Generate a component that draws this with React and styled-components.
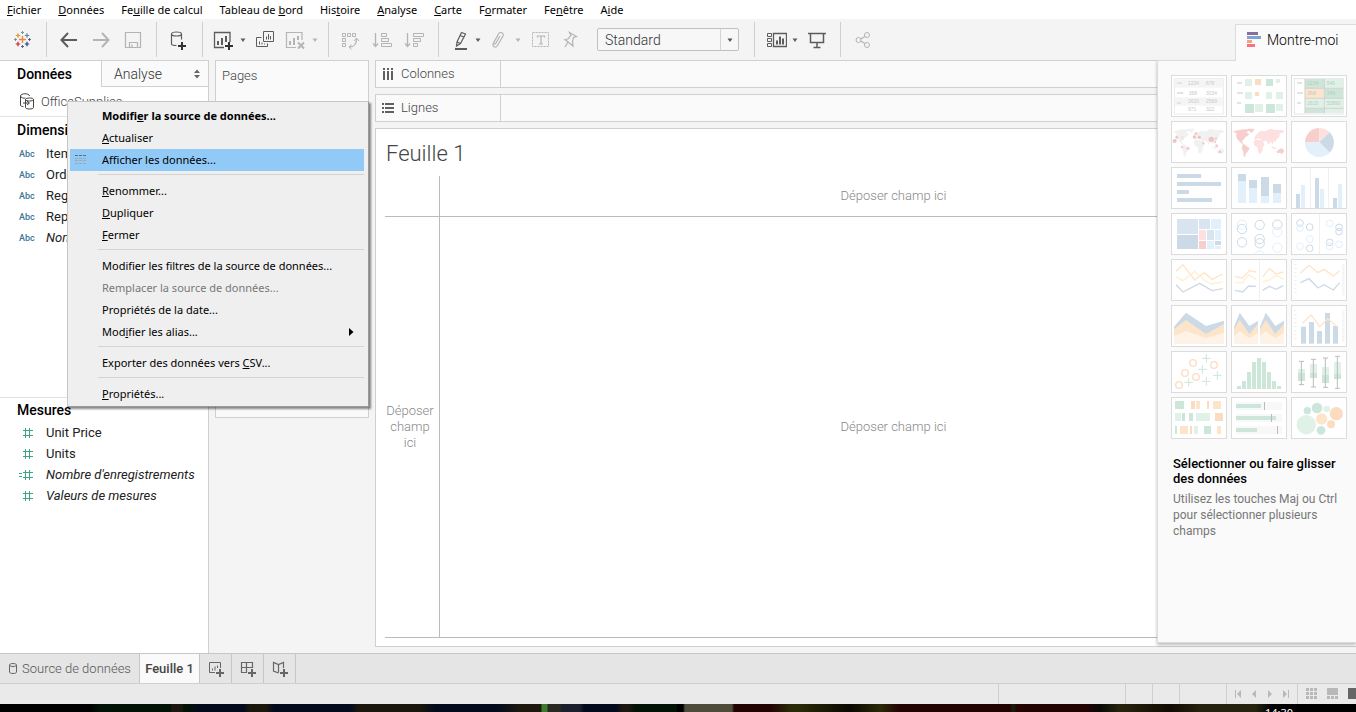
import React from "react";
import styled, { createGlobalStyle, css } from "styled-components";

const GlobalStyle = createGlobalStyle`
  * { box-sizing: border-box; }
  body { margin: 0; overflow: hidden; background: #f4f4f4; }
  button, select { font: inherit; color: inherit; }
  button { border: 0; padding: 0; background: none; text-align: left; }
  h1, h2, p, ul { margin: 0; padding: 0; font-weight: normal; }
  ul { list-style: none; }
  svg { display: block; flex: none; }
`;

const systemFont = `"Noto Sans", "Open Sans", sans-serif`;
const appFont = `Roboto, "Liberation Sans", sans-serif`;
const line = "#d0d0d0";

const Window = styled.div`
  position: relative;
  display: flex;
  flex-direction: column;
  height: 100vh;
  font: 300 13px/16px ${appFont};
  color: #333;
`;

/* ---------- menu bar ---------- */

const MenuBar = styled.nav`
  display: flex;
  gap: 17px;
  height: 19px;
  flex: none;
  padding: 0 7px;
  background: #fff;
  color: #000;
  font: 11px/19px ${systemFont};
  white-space: nowrap;
`;

/* ---------- toolbar ---------- */

const Toolbar = styled.div`
  display: flex;
  align-items: center;
  height: 41px;
  flex: none;
`;

const ToolGroup = styled.div`
  display: flex;
  align-items: center;
  gap: ${(p) => p.$gap ?? 8}px;
  height: 35px;
  padding: 0 ${(p) => p.$end ?? 11}px 0 ${(p) => p.$start ?? 10}px;
  border-right: ${(p) => (p.$last ? "0" : `1px solid ${line}`)};
`;

const ToolButton = styled.button`
  display: flex;
  align-items: center;
  gap: 4px;
  height: 24px;
  color: ${(p) => (p.disabled ? "#b4b4b4" : "#5c5c5c")};
`;

const SelectBox = styled.span`
  position: relative;
  display: block;
  width: 142px;
  margin-left: 15px;
`;

const FitSelect = styled.select`
  display: block;
  width: 100%;
  height: 23px;
  padding: 0 7px;
  appearance: none;
  border: 1px solid #c0c0c0;
  border-radius: 2px;
  background: #f7f7f7;
  font: 300 14px/20px ${appFont};
  color: #333;
`;

const SelectArrow = styled.span`
  position: absolute;
  top: 1px;
  right: 1px;
  bottom: 1px;
  display: flex;
  align-items: center;
  justify-content: center;
  width: 18px;
  border-left: 1px solid #d4d4d4;
  color: #555;
  pointer-events: none;
`;

/* ---------- work area ---------- */

const WorkArea = styled.main`
  display: flex;
  flex: 1;
  min-height: 0;
`;

const DataPane = styled.aside`
  display: flex;
  flex-direction: column;
  width: 209px;
  flex: none;
  border-top: 1px solid ${line};
  border-right: 1px solid ${line};
  background: #fff;
`;

const PaneTabs = styled.div`
  display: flex;
  height: 26px;
  flex: none;
`;

const PaneTab = styled.button`
  display: flex;
  align-items: center;
  justify-content: space-between;
  flex: ${(p) => (p.$active ? "0 0 101px" : "1")};
  padding: 0 8px 0 ${(p) => (p.$active ? 17 : 12)}px;
  font-size: 14px;
  ${(p) =>
    p.$active
      ? css`
          font-weight: 500;
          color: #000;
        `
      : css`
          border-left: 1px solid ${line};
          border-bottom: 1px solid ${line};
          background: #fafafa;
        `}
`;

const SourceRow = styled.button`
  display: flex;
  align-items: center;
  gap: 5px;
  height: 30px;
  flex: none;
  padding-left: 19px;
  border-bottom: 1px solid #e2e2e2;
  color: #444;
`;

const FieldSection = styled.section`
  flex: ${(p) => p.$share} 1 0;
  min-height: 0;
  padding-top: ${(p) => p.$top}px;
  border-top: ${(p) => (p.$ruled ? "1px solid #e2e2e2" : "0")};
`;

const FieldHeading = styled.h2`
  padding-left: 17px;
  font: 500 14px/16px ${appFont};
  color: #000;
`;

const FieldList = styled.ul`
  padding-top: 5px;
`;

const Field = styled.li`
  display: flex;
  align-items: center;
  height: 21px;
  padding-left: 19px;
  font-style: ${(p) => (p.$calculated ? "italic" : "normal")};
  color: #222;
  white-space: nowrap;
`;

const TypeMark = styled.span`
  width: 27px;
  font: 500 9px/16px ${appFont};
  color: #3c7896;
`;

const CardColumn = styled.div`
  width: 166px;
  flex: none;
  padding: 0 6px;
`;

const ShelfCard = styled.section`
  height: 358px;
  padding: 7px 6px;
  border: 1px solid ${line};
  background: #fafafa;
  color: #444;
`;

const SheetColumn = styled.div`
  display: flex;
  flex-direction: column;
  flex: 1;
  gap: 6px;
  min-width: 0;
  padding-bottom: 6px;
`;

const Shelf = styled.div`
  display: flex;
  height: 28px;
  flex: none;
  border: 1px solid ${line};
  border-right: 0;
  background: #fafafa;
`;

const ShelfLabel = styled.div`
  display: flex;
  align-items: center;
  gap: 7px;
  width: 125px;
  padding-left: 6px;
  border-right: 1px solid ${line};
  color: #444;
`;

const Sheet = styled.section`
  display: flex;
  flex-direction: column;
  flex: 1;
  padding: 10px 9px 8px;
  border: 1px solid ${line};
  border-right: 0;
  background: #fff;
`;

const SheetTitle = styled.h1`
  height: 37px;
  padding-left: 1px;
  font: 300 22px/30px ${appFont};
  color: #444;
`;

const DropGrid = styled.div`
  display: grid;
  grid-template: 41px 1fr / 55px 1fr;
  flex: 1;
  border-bottom: 1px solid #bbb;
`;

const DropZone = styled.div`
  display: flex;
  align-items: center;
  justify-content: center;
  padding-right: ${(p) => (p.$narrow ? 4 : 0)}px;
  border-right: ${(p) => (p.$right ? "1px solid #bbb" : "0")};
  border-bottom: ${(p) => (p.$bottom ? "1px solid #bbb" : "0")};
  text-align: center;
  color: #888;
`;

/* ---------- show me ---------- */

const ShowMe = styled.aside`
  position: absolute;
  top: 24px;
  right: 0;
  display: flex;
  flex-direction: column;
  width: 199px;
  height: calc(100vh - 93px);
`;

const ShowMeTab = styled.button`
  z-index: 1;
  display: flex;
  align-items: center;
  gap: 6px;
  height: 37px;
  flex: none;
  margin: 0 0 -1px 78px;
  padding: 0 0 6px 11px;
  border: 1px solid #dcdcdc;
  border-width: 1px 0 0 1px;
  background: #fafafa;
  font-size: 14px;
  color: #000;
  white-space: nowrap;
`;

const ShowMeBody = styled.div`
  flex: 1;
  padding: 14px 9px 0 13px;
  border: 1px solid #dcdcdc;
  border-right: 0;
  background: #fafafa;
  box-shadow: 0 2px 3px #0004;
`;

const ThumbGrid = styled.div`
  display: grid;
  grid-template-columns: repeat(3, 56px);
  gap: 4px;
`;

const Thumb = styled.button`
  height: 42px;
  border: 1px solid #dcdcdc;
  background: #fff;
`;

const HintTitle = styled.h2`
  padding: 17px 0 0 2px;
  font: 500 13px/15px ${appFont};
  color: #000;
`;

const HintText = styled.p`
  padding: 5px 0 0 2px;
  font-size: 12px;
  color: #777;
`;

/* ---------- context menu ---------- */

const ContextMenu = styled.div`
  position: absolute;
  z-index: 2;
  top: 101px;
  left: 67px;
  width: 302px;
  padding: 3px 4px 1px 2px;
  border: 1px solid #c6c6c6;
  border-right-color: #999;
  border-bottom-color: #999;
  background: #efefef;
  box-shadow: 2px 2px 2px #0007;
  font: 11px/22px ${systemFont};
`;

const MenuItem = styled.button`
  display: flex;
  align-items: center;
  width: 100%;
  height: 22px;
  padding-right: 10px;
  background: ${(p) => (p.$active ? "#91c9f7" : "none")};
  color: ${(p) => (p.disabled ? "#777" : "#000")};
  font-weight: ${(p) => (p.$strong ? "bold" : "normal")};
  white-space: nowrap;
`;

const MenuGutter = styled.span`
  width: 32px;
  padding-left: 5px;
`;

const MenuText = styled.span`
  flex: 1;
`;

const MenuRule = styled.hr`
  height: 1px;
  margin: 3px 0 5px 28px;
  border: 0;
  background: #d4d4d4;
`;

/* ---------- bottom bars ---------- */

const SheetTabs = styled.div`
  display: flex;
  height: 30px;
  flex: none;
  border-top: 1px solid #c6c6c6;
  background: #e5e5e5;
`;

const SheetTab = styled.button`
  display: flex;
  align-items: center;
  justify-content: center;
  gap: 4px;
  width: ${(p) => p.$width}px;
  border-right: 1px solid #c6c6c6;
  background: ${(p) => (p.$active ? "#fafafa" : "none")};
  font-weight: ${(p) => (p.$active ? 500 : 300)};
  color: ${(p) => (p.$active ? "#444" : "#555")};
  white-space: nowrap;
`;

const StatusBar = styled.footer`
  display: flex;
  justify-content: flex-end;
  height: 21px;
  flex: none;
  border-top: 1px solid ${line};
  background: #eaeaea;
`;

const StatusCell = styled.div`
  display: flex;
  align-items: center;
  gap: ${(p) => p.$gap ?? 0}px;
  width: ${(p) => p.$width}px;
  padding-left: ${(p) => p.$start ?? 7}px;
  border-left: 1px solid ${line};
  overflow: hidden;
  color: #b8b8b8;
`;

const StatusButton = styled.button`
  color: ${(p) => (p.$active ? "#666" : "inherit")};
`;

const Taskbar = styled.div`
  height: 8px;
  flex: none;
  padding-right: 63px;
  overflow: hidden;
  background: linear-gradient(
    90deg,
    #000 0 90px, #021204 100px 170px, #1c1611 172px 182px, #021204 184px 188px,
    #020a1c 200px 244px, #1c170c 250px 266px, #020a1c 274px 350px, #1a160d 358px 420px,
    #020a1c 436px 496px, #1d180e 520px 541px, #3f7a2c 542px 547px, #2a2822 548px 560px,
    #1b1f2e 562px 580px, #020a1c 584px 616px, #1c1611 622px 628px, #021204 636px 676px,
    #000 678px 683px, #4e4b3a 685px 732px, #230202 734px 770px, #2a2908 790px 800px,
    #0a0802 850px, #2a2908 880px, #230202 900px 1010px, #17200a 1013px, #230202 1017px 1085px,
    #0a0a05 1100px, #26240d 1120px, #120a02 1170px, #25230f 1200px 1255px, #000 1272px
  );
  font: 11px/18px ${systemFont};
  text-align: right;
  color: #fff;
`;

/* ---------- drawings ---------- */

const Icon = ({ w = 24, h = 24, children }) => (
  <svg width={w} height={h} viewBox={`0 0 ${w} ${h}`} fill="none" stroke="currentColor" aria-hidden="true">
    {children}
  </svg>
);

const Caret = () => (
  <Icon w={8} h={8}>
    <path d="M1.5 2.5h5L4 6z" fill="currentColor" stroke="none" />
  </Icon>
);

const plus = (x, y, r) => `M${x - r} ${y}h${r * 2}M${x} ${y - r}v${r * 2}`;

const LogoIcon = () => (
  <Icon>
    <path d={plus(12.5, 11.5, 3.5)} stroke="#eb8a3c" strokeWidth="1.4" />
    <path d={plus(8, 7.5, 2.2)} stroke="#eb912c" strokeWidth="1.2" />
    <path d={plus(17, 7.5, 2.2)} stroke="#59879b" strokeWidth="1.2" />
    <path d={plus(8, 16, 2.2)} stroke="#c72035" strokeWidth="1.2" />
    <path d={plus(17, 16, 2.2)} stroke="#1f457e" strokeWidth="1.2" />
    <path d={plus(12.5, 4.5, 1.5) + plus(5.5, 11.5, 1.5)} stroke="#7199a6" />
    <path d={plus(19.5, 11.5, 1.5) + plus(12.5, 18.5, 1.5)} stroke="#5b6591" />
  </Icon>
);

const BackIcon = () => (
  <Icon><path d="M4.5 12H20M11 5l-6.5 7 6.5 7" strokeWidth="2" /></Icon>
);
const ForwardIcon = () => (
  <Icon><path d="M4 12h15.5M13 5l6.5 7-6.5 7" strokeWidth="2" /></Icon>
);
const SaveIcon = () => (
  <Icon><path d="M4.5 4.5h15v15h-15zM8.5 19.5v-5h8v5M11 16.5v3" strokeWidth="1.2" /></Icon>
);
const AddSourceIcon = () => (
  <Icon>
    <path d="M14.5 11.5V6c0-1-2-2-5-2s-5 1-5 2v10c0 1 2 1.5 5 1.5M4.5 6c0 1 2 2 5 2s5-1 5-2" strokeWidth="1.2" />
    <path d={plus(15, 18, 4)} stroke="#333" strokeWidth="2" />
  </Icon>
);
const NewSheetIcon = () => (
  <Icon>
    <path d="M13 19.5H3.5v-15h15.5V14" strokeWidth="1.3" />
    <path d="M7 17v-4M11 17v-7M15 14V8" strokeWidth="2" />
    <path d={plus(18, 18, 4)} stroke="#333" strokeWidth="2" />
  </Icon>
);
const DuplicateIcon = () => (
  <Icon>
    <path d="M10.5 3.5h10v10h-10zM8.5 9.5h-5v9h11v-3M13.5 11.5v-3M15.5 11.5V6M17.5 11.5V8M6.5 16.5v-3M9 16.5v-2M11.5 16.5v-1" />
  </Icon>
);
const ClearSheetIcon = () => (
  <Icon>
    <path d="M13 19.5H3.5v-15h15.5V12" strokeWidth="1.2" />
    <path d="M7 17v-4M11 17v-7M15 12V8" strokeWidth="2" />
    <path d="M15 14.5l6 6M21 14.5l-6 6" strokeWidth="2" />
  </Icon>
);
const SwapIcon = () => (
  <Icon>
    <path d="M4.5 5.5h3v3h-3zM9.5 5.5h3v3h-3zM14.5 5.5h3v3h-3zM4.5 10.5h3v3h-3zM4.5 15.5h3v3h-3z" />
    <path d="M18.5 11c0 5-3 8-7 8" strokeWidth="1.3" />
    <path d="M16 13l2.5-3 2.5 3M13.5 16.5L11 19l2.5 2.5" />
  </Icon>
);
const SortAscIcon = () => (
  <Icon>
    <path d="M5.5 5v13M3 15.5L5.5 18.5 8 15.5" strokeWidth="1.3" />
    <path d="M11.5 5.5h5v3h-5zM11.5 10.5h7v3h-7zM11.5 15.5h10v3h-10z" />
  </Icon>
);
const SortDescIcon = () => (
  <Icon>
    <path d="M5.5 5v13M3 15.5L5.5 18.5 8 15.5" strokeWidth="1.3" />
    <path d="M11.5 5.5h10v3h-10zM11.5 10.5h7v3h-7zM11.5 15.5h4v3h-4z" />
  </Icon>
);
const HighlightIcon = () => (
  <Icon>
    <path d="M15.5 4.5l4 1.5-5 9.5-3.5-1.5zM11 14l-.5 4 4-2.5M14 7.5l4 1.5" strokeWidth="1.2" />
    <path d="M9 21h12" strokeWidth="2" />
  </Icon>
);
const ClipIcon = () => (
  <Icon>
    <path d="M14 8l-4 7c-1 2-3 1-2-1l4.5-8c1.5-3 6-1 4.5 2l-5.5 9.5c-2 3-6 1-4-2.5l4-7" strokeWidth="1.2" />
  </Icon>
);
const LabelIcon = () => (
  <Icon>
    <path d="M6.5 4.5h16v14h-16z" strokeDasharray="2 1" />
    <path d="M11.5 9.5V8h7v1.5M15 8v8M13 16h4" strokeWidth="1.2" />
  </Icon>
);
const PinIcon = () => (
  <Icon>
    <path d="M15.5 4.5l7 4-3 1-1 4 .5 4.5-8-6.5 3-.5 3-3.5zM14 14L11 19" strokeWidth="1.2" />
  </Icon>
);
const CardsIcon = () => (
  <Icon>
    <path d="M4.5 5.5h4v3h-4zM4.5 10.5h4v3h-4zM4.5 15.5h4v3h-4z" />
    <path d="M10.5 5.5h13v13h-13z" strokeWidth="1.3" />
    <path d="M14 16.5v-4M17 16.5v-8M20 16.5v-6" strokeWidth="2" />
  </Icon>
);
const PresentIcon = () => (
  <Icon>
    <path d="M3 5.5h18M5.5 6v8.5h13V6M12 14.5v5M8.5 19.5h7" strokeWidth="1.5" />
  </Icon>
);
const ShareIcon = () => (
  <Icon>
    <circle cx="7.5" cy="12" r="2.5" /><circle cx="16" cy="7" r="2.5" /><circle cx="16" cy="17" r="2.5" />
    <path d="M9.5 11L14 8.5M9.5 13l4.5 2.5" strokeWidth="1.3" />
  </Icon>
);
const SpinnerIcon = () => (
  <Icon w={6} h={10}>
    <path d="M0 4l3-3.5L6 4zM0 6l3 3.5L6 6z" fill="#666" stroke="none" />
  </Icon>
);
const SourceIcon = () => (
  <Icon w={17} h={17}>
    <path d="M10.5 3c0-3-9-3-9 0v9c0 1 1 1.5 3 1.5M1.5 3c0 2 4 2.5 5 2" />
    <path d="M14.5 6.5c0-2-8-2-8 0v8c0 2 8 2 8 0zM6.5 6.5c0 2 8 2 8 0M4 10h6M8 8l2.5 2L8 12" />
  </Icon>
);
const NumberIcon = ({ calculated }) => (
  <Icon w={16} h={12}>
    <path d="M6.5 1v10M10.5 1v10M4 3.5h10M4 8.5h10" stroke="#3fa580" />
    {calculated && <path d="M0 4.5h3M0 7.5h3" stroke="#3fa580" />}
  </Icon>
);
const ColumnsIcon = () => (
  <Icon w={12} h={12}>
    <path d="M2 0v2M6 0v2M10 0v2M2 3v9M6 3v9M10 3v9" stroke="#606060" strokeWidth="2" />
  </Icon>
);
const RowsIcon = () => (
  <Icon w={12} h={12}>
    <path d="M0 2h2M0 6h2M0 10h2M3 2h9M3 6h9M3 10h9" stroke="#606060" strokeWidth="2" />
  </Icon>
);
const ShowMeIcon = () => (
  <Icon w={14} h={16}>
    <g strokeWidth="3">
      <path d="M0 1.5h11" stroke="#86709b" /><path d="M0 5.5h14" stroke="#82a3cf" />
      <path d="M0 9.5h5" stroke="#f5a47f" /><path d="M0 13.5h8" stroke="#fb7080" />
    </g>
  </Icon>
);
const TableIcon = () => (
  <Icon w={13} h={10}>
    <path d="M0 .5h12" stroke="#55708a" strokeDasharray="3 1" />
    <path d="M0 3.5h12M0 5.5h12M0 8.5h12" stroke="#9aa9b5" strokeDasharray="3 1" />
  </Icon>
);
const SubmenuIcon = () => (
  <Icon w={5} h={8}><path d="M0 0l4.5 4L0 8z" fill="#000" stroke="none" /></Icon>
);
const CylinderIcon = () => (
  <Icon w={10} h={14}>
    <path d="M1.5 3c0-2 7-2 7 0v7c0 2-7 2-7 0zM1.5 3c0 2 7 2 7 0" stroke="#666" />
  </Icon>
);
const TabSheetIcon = () => (
  <Icon w={16} h={16}>
    <path d="M7 11.5H1.5v-10h11V7M4.5 9.5v-2M7 9.5v-4M9.5 7V4.5" stroke="#666" />
    <path d={plus(12, 12, 4)} stroke="#666" strokeWidth="2" />
  </Icon>
);
const TabDashboardIcon = () => (
  <Icon w={16} h={16}>
    <path d="M7 11.5H1.5v-10h11V7M6.5 1.5v10M1.5 6.5h11" stroke="#666" strokeWidth="1.2" />
    <path d={plus(12, 12, 4)} stroke="#666" strokeWidth="2" />
  </Icon>
);
const TabStoryIcon = () => (
  <Icon w={16} h={16}>
    <path d="M6.5 12l-5-2V1.5l5 2 5-2V7M6.5 3.5v8" stroke="#666" strokeWidth="1.2" />
    <path d={plus(12, 12, 4)} stroke="#666" strokeWidth="2" />
  </Icon>
);
const PagerIcon = ({ d }) => (
  <Icon w={8} h={8}><path d={d} fill="currentColor" stroke="none" /></Icon>
);
const SorterIcon = () => (
  <Icon w={12} h={12}>
    <path d="M0 1.5h11M0 5.5h11M0 9.5h11" strokeWidth="3" strokeDasharray="3 1" />
  </Icon>
);
const FilmstripIcon = () => (
  <Icon w={12} h={12}>
    <path d="M0 3.5h11" strokeWidth="7" /><path d="M0 9.5h11" strokeWidth="3" strokeDasharray="3 1" />
  </Icon>
);
const FullIcon = () => (
  <Icon w={12} h={12}><path d="M0 0h12v11H0z" fill="currentColor" stroke="none" /></Icon>
);

/* Chart thumbnails share one 162 by 120 canvas. */
const blue = "#ccdae8", sky = "#e2f0fc", green = "#cce6da", mint = "#e0f2e7";
const orange = "#fde5cb", peach = "#fbdcc0", pink = "#f6cfcd", rose = "#fde0df";

const Bars = ({ items }) => items.map(([x, y, w, h, c], i) => (
  <rect key={i} x={x} y={y} width={w} height={h} fill={c} />
));
const Dots = ({ items, width }) => items.map(([x, y, r, c], i) => (
  <circle key={i} cx={x} cy={y} r={r} fill={width ? "none" : c} stroke={width ? c : "none"} strokeWidth={width} />
));
const Lines = ({ items, width = 4 }) => items.map(([points, c], i) => (
  <polyline key={i} points={points} fill="none" stroke={c} strokeWidth={width} />
));
const Areas = ({ items }) => items.map(([points, c], i) => <polygon key={i} points={points} fill={c} />);
const Digits = ({ items, fill = "#c9c9c9" }) => (
  <g fill={fill} fontFamily="Liberation Sans" fontSize="15">
    {items.map(([x, y, t], i) => <text key={i} x={x} y={y}>{t}</text>)}
  </g>
);
const WorldMap = ({ west, east }) => (
  <Areas items={[
    ["3,30 10,26 22,24 34,22 50,24 44,32 52,36 46,42 40,46 34,54 30,58 33,66 38,68 32,68 24,60 16,52 12,42 14,34", west],
    ["38,24 50,20 68,20 64,28 56,34 54,28", west],
    ["32,69 38,67 46,74 53,78 48,88 42,94 39,105 35,103 34,90 29,78", west],
    ["65,58 72,53 84,55 92,58 98,68 92,76 92,86 84,96 79,92 77,76 66,70", east],
    ["66,50 70,42 78,32 88,26 100,28 116,20 130,24 148,24 158,28 150,34 144,32 142,44 134,52 130,60 124,58 122,68 116,58 110,68 104,58 96,56 90,62 86,52 78,48 70,54", east],
    ["118,72 126,76 134,78 130,82 120,78", east],
    ["134,88 142,82 150,78 157,88 150,96 144,92 136,94", west],
  ]} />
);

const areaShape = (x, w) => [
  [`${x},62 ${x + w * 0.24},20 ${x + w * 0.64},60 ${x + w},44 ${x + w},112 ${x},112`, blue],
  [`${x},70 ${x + w * 0.24},42 ${x + w * 0.64},84 ${x + w},54 ${x + w},112 ${x},112`, orange],
  [`${x},90 ${x + w * 0.24},76 ${x + w * 0.64},96 ${x + w},80 ${x + w},112 ${x},112`, "#fef3e6"],
];

const ticks = [14, 26, 38, 50, 62, 74, 86, 98];
const Ticks = ({ x, dense }) => (
  <path d={(dense ? [...ticks, 20, 32, 44, 56, 68, 80, 92, 104] : ticks).map((y) => `M${x} ${y}h8`).join("")} stroke="#e6e6e6" strokeWidth="2" />
);

const charts = [
  ["Table de texte", <>
    <rect x="7" y="8" width="147" height="106" fill="none" stroke="#ececec" strokeWidth="3" />
    <Bars items={[[9, 10, 143, 25, "#f5f5f5"], [9, 64, 143, 25, "#f5f5f5"], [15, 18, 15, 6, "#e4e4e4"], [15, 48, 19, 6, "#e4e4e4"], [15, 78, 12, 6, "#e4e4e4"]]} />
    <Digits items={[[48, 28, "1234"], [102, 28, "678"], [50, 56, "368"], [102, 56, "3034"], [48, 82, "2620"], [102, 82, "2569"], [48, 106, "971"], [102, 106, "322"]]} />
  </>],
  ["Carte thermique", <Bars items={[
    [15, 18, 15, 6, "#e4e4e4"], [15, 48, 18, 6, "#e4e4e4"], [15, 78, 12, 6, "#e4e4e4"],
    [39, 9, 21, 21, mint], [69, 9, 18, 18, peach], [102, 9, 21, 21, green], [132, 9, 12, 12, mint],
    [39, 48, 21, 21, mint], [69, 48, 12, 12, peach], [102, 48, 18, 21, mint], [132, 48, 21, 21, mint],
    [39, 84, 27, 27, green], [69, 84, 24, 24, mint], [102, 84, 27, 27, green], [132, 84, 21, 21, mint],
  ]} />],
  ["Table de surbrillance", <>
    <rect x="7" y="8" width="147" height="106" fill="none" stroke="#e6e6e6" strokeWidth="3" />
    <Bars items={[
      [15, 18, 15, 6, "#e4e4e4"], [15, 48, 18, 6, "#e4e4e4"], [15, 78, 12, 6, "#e4e4e4"],
      [39, 9, 58, 27, green], [99, 9, 54, 27, mint], [39, 39, 58, 27, orange], [99, 39, 54, 27, green],
      [39, 69, 58, 27, mint], [99, 69, 54, 27, mint], [39, 99, 58, 12, green], [99, 99, 54, 12, mint],
    ]} />
    <path d="M39 9v103M97 9v103M39 37h115M39 67h115M39 97h115" stroke="#cfcfcf" strokeWidth="3" fill="none" />
    <Digits fill="#b9cbc0" items={[[46, 26, "1234"], [104, 26, "546"], [46, 57, "368"], [104, 57, "349"], [46, 88, "2620"], [104, 88, "53890"]]} />
  </>],
  ["Carte avec symboles", <>
    <WorldMap west="#f1f1f1" east="#f1f1f1" />
    <Dots items={[[8, 57, 6, "#eec3c5"], [14, 46, 4, "#eec3c5"], [31, 46, 5, rose], [72, 35, 5, pink], [67, 45, 5, "#eec3c5"], [82, 46, 5, "#eec3c5"], [118, 52, 8, "#eec3c5"], [132, 50, 4, pink], [94, 64, 4, pink], [30, 75, 4, pink], [48, 79, 5, pink], [129, 60, 4, pink], [134, 72, 5, pink], [144, 90, 4, "#eec3c5"]]} />
  </>],
  ["Carte choroplèthe", <WorldMap west={pink} east={rose} />],
  ["Secteurs", <>
    <path d="M82 61V18A43 43 0 0 0 39 61z" fill={pink} /><path d="M82 61V18a43 43 0 0 1 31 13z" fill={rose} />
    <path d="M82 61l31-30a43 43 0 0 1 0 61z" fill={blue} /><path d="M82 61H39a43 43 0 0 0 74 31z" fill={sky} />
  </>],
  ["Barres horizontales", <Bars items={[[15, 18, 72, 12, blue], [15, 42, 132, 12, blue], [15, 66, 36, 12, blue], [15, 90, 105, 12, blue]]} />],
  ["Barres empilées", <Bars items={[[18, 18, 24, 21, blue], [18, 39, 24, 66, sky], [51, 36, 24, 24, blue], [51, 60, 24, 45, sky], [87, 27, 24, 57, blue], [87, 84, 24, 21, sky], [123, 48, 24, 27, blue], [123, 75, 24, 30, sky]]} />],
  ["Barres côte à côte", <Bars items={[[54, 0, 3, 120, "#f0f0f0"], [108, 0, 3, 120, "#f0f0f0"], [12, 78, 12, 42, blue], [27, 51, 12, 69, sky], [69, 30, 12, 90, blue], [84, 63, 12, 57, sky], [123, 90, 12, 30, blue], [138, 48, 12, 72, sky]]} />],
  ["Carte proportionnelle", <Bars items={[[15, 15, 63, 45, "#d8e5f0"], [15, 63, 63, 42, blue], [81, 15, 33, 30, "#d8e5f0"], [117, 15, 30, 30, sky], [81, 48, 21, 30, rose], [81, 81, 21, 24, pink], [105, 48, 21, 30, "#d8e5f0"], [105, 81, 21, 24, sky], [129, 48, 18, 30, sky], [129, 81, 18, 12, blue], [129, 96, 18, 9, sky]]} />],
  ["Cercles", <Dots width={3} items={[[30, 32, 14, sky], [30, 45, 14, blue], [30, 85, 14, blue], [83, 33, 14, blue], [83, 75, 14, blue], [83, 88, 14, blue], [83, 124, 14, sky], [136, 32, 14, blue], [136, 54, 14, sky], [136, 101, 14, sky]]} />],
  ["Cercles côte à côte", <>
    <Bars items={[[81, 0, 3, 120, "#f0f0f0"]]} />
    <Dots width={3} items={[[24, 27, 10, blue], [24, 42, 10, sky], [53, 39, 10, blue], [53, 75, 10, sky], [24, 97, 10, sky], [53, 103, 10, blue], [113, 28, 10, sky], [141, 40, 10, blue], [141, 53, 10, blue], [113, 85, 10, blue], [113, 97, 10, sky], [141, 91, 10, sky]]} />
  </>],
  ["Courbes continues", <Lines items={[["12,34 33,14 68,60 97,38 120,58 152,42", orange], ["12,50 33,62 68,34 97,60 118,72 152,66", "#fef0d0"], ["12,74 33,96 83,70 120,92 152,86", blue]]} />],
  ["Courbes discrètes", <>
    <Bars items={[[81, 0, 3, 120, "#f0f0f0"]]} />
    <Lines items={[["9,50 32,54 52,32 72,36", orange], ["9,68 32,68 50,44 72,58", "#fef0d0"], ["9,91 32,96 50,78 72,79", blue], ["92,50 112,26 132,42 154,36", orange], ["92,66 112,60 132,46 154,58", "#fef0d0"], ["92,91 112,79 132,88 154,77", blue]]} />
  </>],
  ["Courbes doubles", <><Ticks x={6} /><Ticks x={150} dense /><Lines items={[["25,40 51,16 78,38 96,28 124,48 143,32", orange], ["25,68 51,56 78,84 96,74 124,90 143,68", blue]]} /></>],
  ["Aires continues", <Areas items={areaShape(6, 150)} />],
  ["Aires discrètes", <><Areas items={areaShape(6, 72)} /><Areas items={areaShape(84, 72)} /></>],
  ["Combinaison double", <>
    <Ticks x={6} /><Ticks x={150} dense />
    <Bars items={[[27, 62, 15, 51, blue], [51, 48, 15, 65, blue], [75, 75, 15, 38, blue], [99, 21, 15, 92, blue], [123, 60, 15, 53, blue]]} />
    <Lines items={[["32,52 57,26 83,62 107,38 136,62", orange]]} />
  </>],
  ["Nuage de points", <>
    <Dots width={4} items={[[21, 99, 10, peach], [39, 63, 10, peach], [63, 33, 10, peach], [72, 75, 10, peach], [126, 39, 10, peach]]} />
    <path d={plus(103, 19, 13) + plus(91, 52, 13) + plus(136, 70, 13) + plus(103, 88, 13) + plus(50, 91, 13)} stroke={green} strokeWidth="3" />
  </>],
  ["Histogramme", <Bars items={[[15, 102], [30, 87], [45, 60], [60, 30], [75, 18], [90, 30], [105, 60], [120, 87], [135, 102]].map(([x, y]) => [x, y, 12, 111 - y, green])} />],
  ["Boîte à moustaches", <>
    <Bars items={[[18, 51, 21, 12, mint], [18, 63, 21, 24, green], [54, 36, 21, 27, mint], [54, 63, 21, 15, green], [90, 45, 21, 24, mint], [90, 69, 21, 24, green], [126, 30, 21, 36, mint], [126, 66, 21, 15, green]]} />
    <path d="M28 28v70M21 28h15M21 98h15M64 22v83M57 22h15M57 105h15M100 18v88M93 18h15M93 106h15M136 13v96M129 13h15M129 109h15" stroke="#bcbcbc" strokeWidth="3" />
  </>],
  ["Gantt", <Bars items={[[9, 9, 27, 24, green], [57, 9, 12, 24, peach], [72, 9, 12, 24, orange], [105, 9, 6, 24, peach], [123, 9, 24, 24, orange], [9, 45, 18, 24, mint], [30, 45, 9, 24, green], [51, 45, 12, 24, green], [72, 45, 42, 24, mint], [129, 45, 24, 24, peach], [9, 84, 6, 24, green], [24, 84, 24, 24, orange], [54, 84, 6, 24, peach], [66, 84, 12, 24, mint], [96, 84, 21, 24, green], [135, 84, 12, 24, orange]]} />],
  ["Graphique à puces", <Bars items={[[12, 12, 138, 24, "#f8f8f8"], [12, 48, 138, 24, "#f8f8f8"], [12, 84, 138, 24, "#f8f8f8"], [12, 18, 75, 12, green], [12, 54, 120, 12, green], [12, 90, 63, 12, green], [96, 12, 3, 24, "#bbb"], [117, 48, 3, 24, "#bbb"], [135, 84, 3, 24, "#bbb"]]} />],
  ["Bulles", <Dots items={[[43, 80, 29, mint], [46, 38, 11, green], [75, 30, 16, green], [104, 33, 10, mint], [133, 47, 20, peach], [89, 63, 17, orange], [117, 79, 12, peach], [87, 97, 13, green]]} />],
];

/* Underlines the access key that follows an ampersand. */
const Mnemonic = ({ label }) => {
  const [before, after] = label.split("&");
  return after === undefined ? label : <>{before}<u>{after[0]}</u>{after.slice(1)}</>;
};

const MenuBarButton = styled.button`
  flex: none;
`;

const menus = ["&Fichier", "&Données", "Fe&uille de calcul", "Tableau de &bord", "His&toire", "&Analyse", "&Carte", "F&ormater", "Fe&nêtre", "A&ide"];

const contextItems = [
  { label: "Modifi&er la source de données...", strong: true },
  { label: "&Actualiser" },
  { label: "Afficher les données...", active: true },
  null,
  { label: "&Renommer..." },
  { label: "&Dupliquer" },
  { label: "&Fermer" },
  null,
  { label: "Modifier les filtres de la source de données..." },
  { label: "Remplacer la source de données...", disabled: true },
  { label: "Propriétés de la date..." },
  { label: "Mod&ifier les alias...", submenu: true },
  null,
  { label: "Exporter des données vers &CSV..." },
  null,
  { label: "&Propriétés..." },
];

const Tool = ({ icon: Glyph, label, menu, disabled }) => (
  <ToolButton aria-label={label} disabled={disabled}>
    <Glyph />
    {menu && <Caret />}
  </ToolButton>
);

export default function App() {
  return (
    <Window>
      <GlobalStyle />
      <MenuBar>
        {menus.map((m) => <MenuBarButton key={m}><Mnemonic label={m} /></MenuBarButton>)}
      </MenuBar>

      <Toolbar>
        <ToolGroup $end={12}><Tool icon={LogoIcon} label="Accueil" /></ToolGroup>
        <ToolGroup>
          <Tool icon={BackIcon} label="Annuler" />
          <Tool icon={ForwardIcon} label="Rétablir" disabled />
          <Tool icon={SaveIcon} label="Enregistrer" disabled />
        </ToolGroup>
        <ToolGroup><Tool icon={AddSourceIcon} label="Nouvelle source" /></ToolGroup>
        <ToolGroup $start={8} $end={9} $gap={6}>
          <Tool icon={NewSheetIcon} label="Nouvelle feuille" menu />
          <Tool icon={DuplicateIcon} label="Dupliquer" />
          <Tool icon={ClearSheetIcon} label="Effacer" menu disabled />
        </ToolGroup>
        <ToolGroup $start={9} $end={12}>
          <Tool icon={SwapIcon} label="Permuter" disabled />
          <Tool icon={SortAscIcon} label="Tri croissant" disabled />
          <Tool icon={SortDescIcon} label="Tri décroissant" disabled />
        </ToolGroup>
        <ToolGroup $start={7} $end={15} $gap={4}>
          <Tool icon={HighlightIcon} label="Surbrillance" menu />
          <Tool icon={ClipIcon} label="Grouper" menu disabled />
          <Tool icon={LabelIcon} label="Étiquettes" disabled />
          <Tool icon={PinIcon} label="Épingler" disabled />
          <SelectBox>
            <FitSelect aria-label="Ajustement"><option>Standard</option></FitSelect>
            <SelectArrow><Caret /></SelectArrow>
          </SelectBox>
        </ToolGroup>
        <ToolGroup $start={8} $gap={6}>
          <Tool icon={CardsIcon} label="Fiches" menu />
          <Tool icon={PresentIcon} label="Présentation" />
        </ToolGroup>
        <ToolGroup $last><Tool icon={ShareIcon} label="Partager" disabled /></ToolGroup>
      </Toolbar>

      <WorkArea>
        <DataPane>
          <PaneTabs>
            <PaneTab $active>Données</PaneTab>
            <PaneTab>Analyse<SpinnerIcon /></PaneTab>
          </PaneTabs>
          <SourceRow><SourceIcon />OfficeSupplies</SourceRow>
          <FieldSection $share={35} $top={5}>
            <FieldHeading>Dimensions</FieldHeading>
            <FieldList>
              {["Item", "Order", "Region", "Rep"].map((f) => (
                <Field key={f}><TypeMark>Abc</TypeMark>{f}</Field>
              ))}
              <Field $calculated><TypeMark>Abc</TypeMark>Noms</Field>
            </FieldList>
          </FieldSection>
          <FieldSection $share={32} $top={4} $ruled>
            <FieldHeading>Mesures</FieldHeading>
            <FieldList>
              <Field><TypeMark><NumberIcon /></TypeMark>Unit Price</Field>
              <Field><TypeMark><NumberIcon /></TypeMark>Units</Field>
              <Field $calculated><TypeMark><NumberIcon calculated /></TypeMark>Nombre d'enregistrements</Field>
              <Field $calculated><TypeMark><NumberIcon /></TypeMark>Valeurs de mesures</Field>
            </FieldList>
          </FieldSection>
        </DataPane>

        <CardColumn><ShelfCard>Pages</ShelfCard></CardColumn>

        <SheetColumn>
          <Shelf><ShelfLabel><ColumnsIcon />Colonnes</ShelfLabel></Shelf>
          <Shelf><ShelfLabel><RowsIcon />Lignes</ShelfLabel></Shelf>
          <Sheet>
            <SheetTitle>Feuille 1</SheetTitle>
            <DropGrid>
              <DropZone $right $bottom />
              <DropZone $bottom>Déposer champ ici</DropZone>
              <DropZone $right $narrow>Déposer champ ici</DropZone>
              <DropZone>Déposer champ ici</DropZone>
            </DropGrid>
          </Sheet>
        </SheetColumn>
      </WorkArea>

      <ShowMe>
        <ShowMeTab><ShowMeIcon />Montre-moi</ShowMeTab>
        <ShowMeBody>
          <ThumbGrid>
            {charts.map(([name, drawing]) => (
              <Thumb key={name} aria-label={name}>
                <svg width="54" height="40" viewBox="0 0 162 120" aria-hidden="true">{drawing}</svg>
              </Thumb>
            ))}
          </ThumbGrid>
          <HintTitle>Sélectionner ou faire glisser des données</HintTitle>
          <HintText>Utilisez les touches Maj ou Ctrl pour sélectionner plusieurs champs</HintText>
        </ShowMeBody>
      </ShowMe>

      <ContextMenu role="menu">
        {contextItems.map((item, i) =>
          item ? (
            <MenuItem key={i} role="menuitem" $strong={item.strong} $active={item.active} disabled={item.disabled}>
              <MenuGutter>{item.active && <TableIcon />}</MenuGutter>
              <MenuText><Mnemonic label={item.label} /></MenuText>
              {item.submenu && <SubmenuIcon />}
            </MenuItem>
          ) : (
            <MenuRule key={i} />
          )
        )}
      </ContextMenu>

      <SheetTabs>
        <SheetTab $width={140}><CylinderIcon />Source de données</SheetTab>
        <SheetTab $width={60} $active>Feuille 1</SheetTab>
        <SheetTab $width={32} aria-label="Nouvelle feuille"><TabSheetIcon /></SheetTab>
        <SheetTab $width={32} aria-label="Nouveau tableau de bord"><TabDashboardIcon /></SheetTab>
        <SheetTab $width={32} aria-label="Nouvelle histoire"><TabStoryIcon /></SheetTab>
      </SheetTabs>

      <StatusBar>
        <StatusCell $width={127} />
        <StatusCell $width={27} />
        <StatusCell $width={27} />
        <StatusCell $width={47} />
        <StatusCell $width={71} $gap={8}>
          <StatusButton aria-label="Premier"><PagerIcon d="M1 0h1v8H1zM7 0v8L3 4z" /></StatusButton>
          <StatusButton aria-label="Précédent"><PagerIcon d="M6 0v8L2 4z" /></StatusButton>
          <StatusButton aria-label="Suivant"><PagerIcon d="M2 0v8l4-4z" /></StatusButton>
          <StatusButton aria-label="Dernier"><PagerIcon d="M1 0v8l4-4zM6 0h1v8H6z" /></StatusButton>
        </StatusCell>
        <StatusCell $width={59} $start={8} $gap={9}>
          <StatusButton aria-label="Trieuse"><SorterIcon /></StatusButton>
          <StatusButton aria-label="Pellicule"><FilmstripIcon /></StatusButton>
          <StatusButton aria-label="Onglets" $active><FullIcon /></StatusButton>
        </StatusCell>
      </StatusBar>
      <Taskbar>14:30</Taskbar>
    </Window>
  );
}
